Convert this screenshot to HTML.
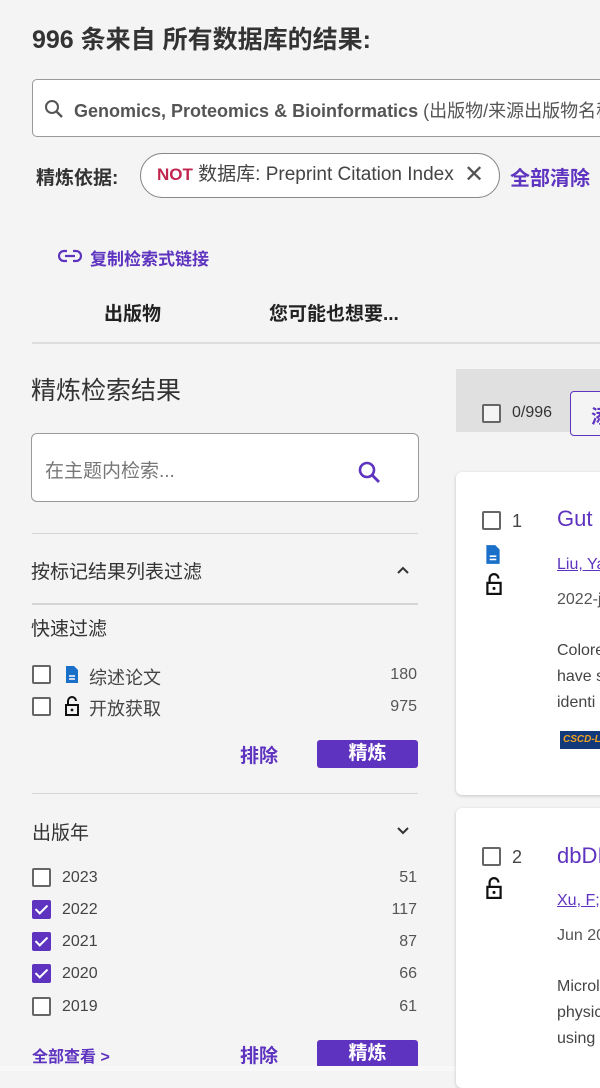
<!DOCTYPE html>
<html><head><meta charset="utf-8"><style>
*{box-sizing:border-box;margin:0;padding:0}
body{width:600px;height:1071px;overflow:hidden;background:#f4f4f4;font-family:"Liberation Sans","Noto Sans CJK SC",sans-serif;color:#333;position:relative}
.a{position:absolute;white-space:nowrap}
.p{color:#5e33bf}
.cb{position:absolute;width:19px;height:19px;border:2px solid #666;border-radius:2px;background:#fff}
.ck{position:absolute;width:19px;height:19px;background:#5e33bf;border-radius:2px}
.ck:after{content:"";position:absolute;left:6px;top:2px;width:5px;height:10px;border:solid #fff;border-width:0 2px 2px 0;transform:rotate(45deg)}
.line{position:absolute;left:32px;width:386px;height:1px;background:#d5d5d5}
.btn{position:absolute;background:#5e33bf;color:#fff;font-weight:bold;font-size:19px;text-align:center;border-radius:3px;line-height:27px}
.num{position:absolute;right:183px;font-size:16px;color:#555}
.yr{position:absolute;left:62px;font-size:16px;color:#444}
</style></head><body>
<div class="a" style="left:32px;top:20px;font-size:25px;font-weight:bold;color:#333">996 条来自 所有数据库的结果:</div>
<div class="a" style="left:32px;top:79px;width:600px;height:58px;background:#fff;border:1px solid #999;border-radius:5px"></div>
<svg class="a" style="left:43px;top:98px" width="22" height="22" viewBox="0 0 22 22"><circle cx="9" cy="9" r="6" fill="none" stroke="#555" stroke-width="2"/><path d="M13.5 13.5L19 19" stroke="#555" stroke-width="2.4"/></svg>
<div class="a" style="left:74px;top:97px;font-size:18px;color:#555"><b>Genomics, Proteomics &amp; Bioinformatics</b> (出版物/来源出版物名称</div>
<div class="a" style="left:36px;top:163px;font-size:19px;font-weight:bold;color:#333">精炼依据:</div>
<div class="a" style="left:140px;top:153px;width:360px;height:45px;border:1px solid #888;border-radius:23px;background:#fff"></div>
<div class="a" style="left:157px;top:163px;font-size:19px;line-height:24px;color:#444"><b style="color:#c0264f;font-size:17px">NOT</b> 数据库: Preprint Citation Index</div>
<div class="a" style="left:464px;top:160px;font-size:24px;color:#555">✕</div>
<div class="a p" style="left:510px;top:162px;font-size:20px;font-weight:bold">全部清除</div>
<svg class="a" style="left:58px;top:249px" width="24" height="14" viewBox="0 0 24 14"><path d="M9 2H6a5 5 0 0 0 0 10h3M15 2h3a5 5 0 0 1 0 10h-3M7 7h10" fill="none" stroke="#5e33bf" stroke-width="2.2"/></svg>
<div class="a p" style="left:90px;top:245px;font-size:17px;font-weight:bold">复制检索式链接</div>
<div class="a" style="left:104px;top:299px;font-size:19px;font-weight:bold;color:#222">出版物</div>
<div class="a" style="left:269px;top:299px;font-size:19px;font-weight:bold;color:#222">您可能也想要...</div>
<div class="a" style="left:32px;top:342px;width:568px;height:2px;background:#ddd"></div>

<div class="a" style="left:31px;top:371px;font-size:25px;color:#333">精炼检索结果</div>
<div class="a" style="left:31px;top:433px;width:388px;height:69px;background:#fff;border:1px solid #999;border-radius:6px"></div>
<div class="a" style="left:45px;top:456px;font-size:19px;color:#777">在主题内检索...</div>
<svg class="a" style="left:356px;top:459px" width="26" height="26" viewBox="0 0 26 26"><circle cx="11" cy="11" r="7" fill="none" stroke="#5e33bf" stroke-width="2.6"/><path d="M16 16L23 23" stroke="#5e33bf" stroke-width="2.8"/></svg>
<div class="line" style="top:533px"></div>
<div class="a" style="left:31px;top:557px;font-size:19px;color:#333">按标记结果列表过滤</div>
<svg class="a" style="left:396px;top:565px" width="14" height="10" viewBox="0 0 14 10"><path d="M2 8L7 3L12 8" fill="none" stroke="#333" stroke-width="2"/></svg>
<div class="line" style="top:603px;height:2px"></div>
<div class="a" style="left:31px;top:614px;font-size:19px;color:#333">快速过滤</div>
<div class="cb" style="left:32px;top:665px"></div>
<svg class="a" style="left:65px;top:665px" width="14" height="19" viewBox="0 0 14 19"><path d="M1 1h8l4 4v13H1z" fill="#1a6fc9"/><path d="M4 11h6M4 14h6" stroke="#fff" stroke-width="1.5"/></svg>
<div class="a" style="left:89px;top:664px;font-size:18px;color:#444">综述论文</div>
<div class="num" style="top:666px">180</div>
<div class="cb" style="left:32px;top:697px"></div>
<svg class="a" style="left:64px;top:696px" width="16" height="20" viewBox="0 0 16 20"><path d="M4 9V5a4 4 0 0 1 8 0" fill="none" stroke="#111" stroke-width="2"/><rect x="2" y="9" width="12" height="10" fill="none" stroke="#111" stroke-width="2"/><circle cx="8" cy="14" r="1.4" fill="#111"/></svg>
<div class="a" style="left:89px;top:695px;font-size:18px;color:#444">开放获取</div>
<div class="num" style="top:698px">975</div>
<div class="a p" style="left:240px;top:741px;font-size:19px;font-weight:bold">排除</div>
<div class="btn" style="left:317px;top:740px;width:101px;height:28px">精炼</div>
<div class="line" style="top:793px"></div>
<div class="a" style="left:32px;top:818px;font-size:19px;color:#333">出版年</div>
<svg class="a" style="left:396px;top:826px" width="14" height="10" viewBox="0 0 14 10"><path d="M2 2L7 7L12 2" fill="none" stroke="#333" stroke-width="2"/></svg>
<div class="cb" style="left:32px;top:868px"></div><div class="yr" style="top:869px">2023</div><div class="num" style="top:869px">51</div>
<div class="ck" style="left:32px;top:900px"></div><div class="yr" style="top:901px">2022</div><div class="num" style="top:901px">117</div>
<div class="ck" style="left:32px;top:932px"></div><div class="yr" style="top:933px">2021</div><div class="num" style="top:933px">87</div>
<div class="ck" style="left:32px;top:964px"></div><div class="yr" style="top:965px">2020</div><div class="num" style="top:965px">66</div>
<div class="cb" style="left:32px;top:997px"></div><div class="yr" style="top:998px">2019</div><div class="num" style="top:998px">61</div>
<div class="a p" style="left:32px;top:1043px;font-size:16px;font-weight:bold">全部查看 &gt;</div>
<div class="a p" style="left:240px;top:1041px;font-size:19px;font-weight:bold">排除</div>
<div class="btn" style="left:317px;top:1040px;width:101px;height:28px">精炼</div>
<div class="a" style="left:0;top:1066px;width:456px;height:5px;background:#f8f8f8"></div>

<div class="a" style="left:456px;top:369px;width:144px;height:63px;background:#e0e0e0"></div>
<div class="cb" style="left:482px;top:404px;background:#f4f4f4"></div>
<div class="a" style="left:512px;top:404px;font-size:16px;color:#333">0/996</div>
<div class="a" style="left:570px;top:391px;width:60px;height:45px;border:1px solid #5e33bf;border-radius:4px;background:#f4f4f4"></div>
<div class="a p" style="left:591px;top:402px;font-size:19px;font-weight:bold">添</div>

<div class="a" style="left:456px;top:472px;width:160px;height:323px;background:#fff;border-radius:6px;box-shadow:0 1px 3px rgba(0,0,0,.2)"></div>
<div class="cb" style="left:482px;top:511px"></div>
<div class="a" style="left:512px;top:511px;font-size:18px;color:#444">1</div>
<svg class="a" style="left:485px;top:544px" width="16" height="21" viewBox="0 0 14 19"><path d="M1 1h8l4 4v13H1z" fill="#1a6fc9"/><path d="M4 11h6M4 14h6" stroke="#fff" stroke-width="1.5"/></svg>
<svg class="a" style="left:485px;top:573px" width="18" height="22" viewBox="0 0 16 20"><path d="M4 9V5a4 4 0 0 1 8 0" fill="none" stroke="#111" stroke-width="2"/><rect x="2" y="9" width="12" height="10" fill="none" stroke="#111" stroke-width="2"/><circle cx="8" cy="14" r="1.4" fill="#111"/></svg>
<div class="a p" style="left:557px;top:506px;font-size:22px">Gut M</div>
<div class="a p" style="left:557px;top:556px;font-size:16px;text-decoration:underline">Liu, Ya</div>
<div class="a" style="left:557px;top:591px;font-size:16px;color:#555">2022-j</div>
<div class="a" style="left:557px;top:638px;font-size:16px;color:#444;line-height:26px">Colore<br>have s<br>identi</div>
<div class="a" style="left:560px;top:731px;width:40px;height:18px;background:#123a7a;color:#f0a020;font-size:10px;font-weight:bold;font-style:italic;line-height:18px;padding-left:3px">CSCD-LI</div>

<div class="a" style="left:456px;top:808px;width:160px;height:280px;background:#fff;border-radius:6px;box-shadow:0 1px 3px rgba(0,0,0,.2)"></div>
<div class="cb" style="left:482px;top:847px"></div>
<div class="a" style="left:512px;top:847px;font-size:18px;color:#444">2</div>
<svg class="a" style="left:485px;top:877px" width="18" height="22" viewBox="0 0 16 20"><path d="M4 9V5a4 4 0 0 1 8 0" fill="none" stroke="#111" stroke-width="2"/><rect x="2" y="9" width="12" height="10" fill="none" stroke="#111" stroke-width="2"/><circle cx="8" cy="14" r="1.4" fill="#111"/></svg>
<div class="a p" style="left:557px;top:843px;font-size:22px">dbDI</div>
<div class="a p" style="left:557px;top:892px;font-size:16px"><u>Xu, F</u>; .</div>
<div class="a" style="left:557px;top:927px;font-size:16px;color:#555">Jun 20</div>
<div class="a" style="left:557px;top:974px;font-size:16px;color:#444;line-height:26px">Microl<br>physic<br>using</div>
</body></html>
